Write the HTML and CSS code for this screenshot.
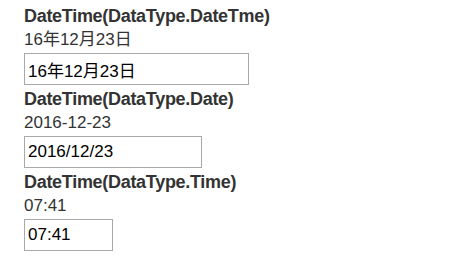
FILE: index.html
```html
<!DOCTYPE html>
<html>
<head>
<meta charset="utf-8">
<link rel="stylesheet" href="styles.css">
</head>
<body>
<div class="page">
  <div class="field">
    <div class="label">DateTime(DataType.DateTme)</div>
    <div class="value">16年12月23日</div>
    <input class="box box-wide" type="text" value="16年12月23日">
  </div>
  <div class="field">
    <div class="label">DateTime(DataType.Date)</div>
    <div class="value">2016-12-23</div>
    <input class="box box-mid" type="text" value="2016/12/23">
  </div>
  <div class="field">
    <div class="label">DateTime(DataType.Time)</div>
    <div class="value">07:41</div>
    <input class="box box-small" type="text" value="07:41">
  </div>
</div>
</body>
</html>
```
FILE: styles.css
```css
html, body {
  margin: 0;
  padding: 0;
  background: #fff;
}
body {
  font-family: "Liberation Sans", Arial, "Noto Sans CJK SC", sans-serif;
  color: #333;
}
.page {
  padding: 4px 0 0 24px;
  display: flex;
  flex-direction: column;
}
.field {
  display: flex;
  flex-direction: column;
  align-items: flex-start;
}
.label {
  font-weight: bold;
  font-size: 18px;
  line-height: 24px;
  letter-spacing: -0.3px;
}
.value {
  font-size: 17px;
  line-height: 24px;
}
.box {
  box-sizing: border-box;
  height: 32px;
  margin: 1px 0 2px;
  padding: 0 3px;
  border: 1px solid #a9a9a9;
  font-family: "Liberation Sans", Arial, "Noto Sans CJK SC", sans-serif;
  font-size: 17px;
  color: #000;
  background: #fff;
  outline: none;
}
.box-wide { width: 225px; }
.box-mid { width: 178px; }
.box-small { width: 89px; }
```
